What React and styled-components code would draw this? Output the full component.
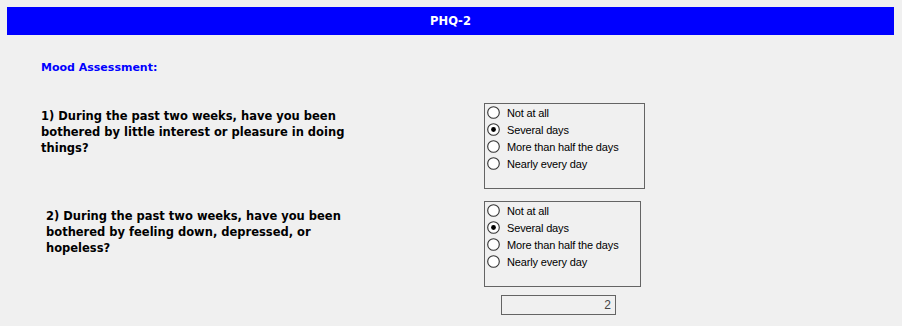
import React from "react";
import styled, { createGlobalStyle } from "styled-components";

const Global = createGlobalStyle`
  html, body {
    margin: 0;
    padding: 0;
    background: #f0f0f0;
  }
  body {
    font-family: "DejaVu Sans", Verdana, sans-serif;
  }
`;

const Page = styled.div`
  padding: 7px 8px 0 7px;
  width: 902px;
  height: 326px;
  box-sizing: border-box;
  overflow: hidden;
`;

const Header = styled.div`
  height: 28px;
  background: #0000ff;
  color: #ffffff;
  font-weight: bold;
  font-size: 11.5px;
  display: flex;
  align-items: center;
  justify-content: center;
`;

const Section = styled.div`
  margin: 25px 0 0 34px;
  color: #0000ff;
  font-weight: bold;
  font-size: 11px;
  line-height: 16px;
`;

const Row = styled.div`
  display: flex;
  align-items: flex-start;
  margin-top: ${(p) => p.$top}px;
`;

const Question = styled.div`
  flex: 0 0 477px;
  padding-left: ${(p) => p.$indent}px;
  padding-top: ${(p) => p.$padTop}px;
  font-weight: bold;
  font-size: 11.5px;
  line-height: 16px;
  color: #000;
  box-sizing: border-box;
`;

const Answer = styled.div`
  display: flex;
  flex-direction: column;
  align-items: flex-start;
`;

const OptionBox = styled.div`
  width: ${(p) => p.$w}px;
  height: 86px;
  border: 1px solid #646464;
  box-sizing: border-box;
  padding: 0 0 0 2px;
  display: flex;
  flex-direction: column;
`;

const Option = styled.label`
  display: flex;
  align-items: center;
  gap: 7px;
  height: 17px;
  font-family: "Liberation Sans", Arial, sans-serif;
  font-size: 11px;
  letter-spacing: -0.15px;
  color: #000;
`;

const Score = styled.div`
  margin: 8px 0 0 17px;
  width: 115px;
  height: 20px;
  border: 1px solid #646464;
  box-sizing: border-box;
  font-family: "Liberation Sans", Arial, sans-serif;
  font-size: 12px;
  color: #444;
  display: flex;
  align-items: center;
  justify-content: flex-end;
  padding-right: 4px;
`;

const Radio = ({ checked }) => (
  <svg width="13" height="13" viewBox="0 0 13 13">
    <circle cx="6.5" cy="6.5" r="5.8" fill="#fff" stroke="#333" strokeWidth="1.1" />
    {checked && <circle cx="6.5" cy="6.5" r="2.4" fill="#000" />}
  </svg>
);

const options = ["Not at all", "Several days", "More than half the days", "Nearly every day"];

const Choices = ({ selected, w }) => (
  <OptionBox $w={w}>
    {options.map((o, i) => (
      <Option key={o}>
        <Radio checked={i === selected} />
        {o}
      </Option>
    ))}
  </OptionBox>
);

export default function App() {
  return (
    <>
      <Global />
      <Page>
        <Header>PHQ-2</Header>
        <Section>Mood Assessment:</Section>
        <Row $top={27}>
          <Question $indent={34} $padTop={5}>
            1) During the past two weeks, have you been
            <br />
            bothered by little interest or pleasure in doing
            <br />
            things?
          </Question>
          <Answer>
            <Choices selected={1} w={161} />
          </Answer>
        </Row>
        <Row $top={12}>
          <Question $indent={39} $padTop={7}>
            2) During the past two weeks, have you been
            <br />
            bothered by feeling down, depressed, or
            <br />
            hopeless?
          </Question>
          <Answer>
            <Choices selected={1} w={157} />
            <Score>2</Score>
          </Answer>
        </Row>
      </Page>
    </>
  );
}
